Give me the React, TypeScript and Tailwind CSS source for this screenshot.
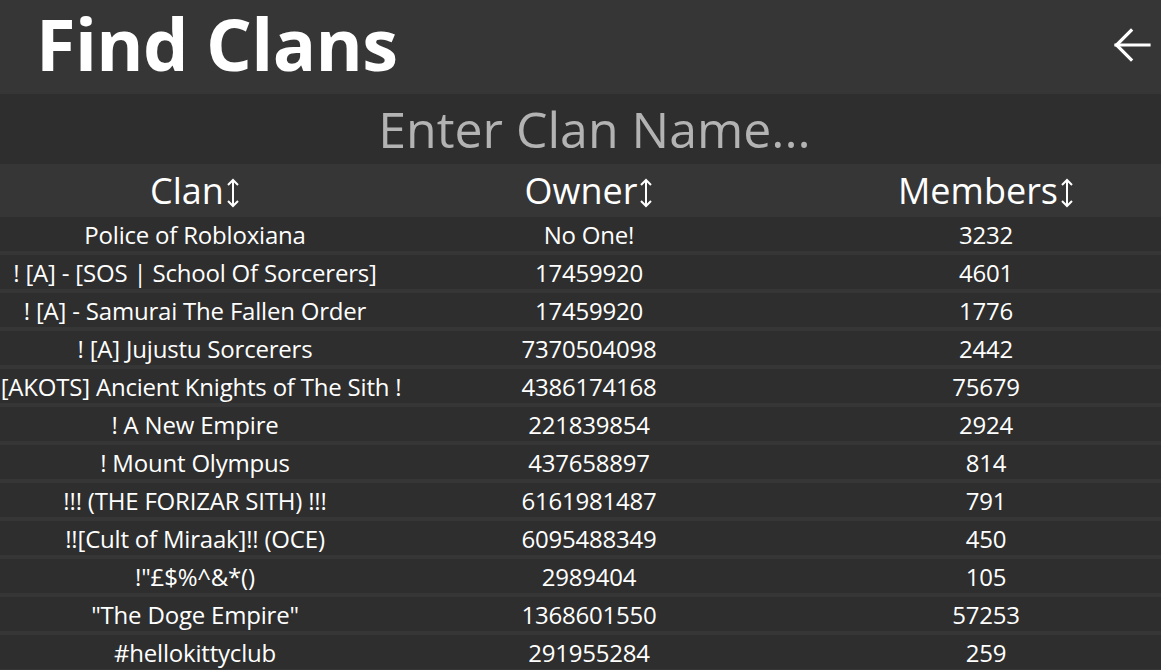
import React from 'react'

type Clan = {
  name: string;
  owner: string;
  members: string;
}

const clans: Clan[] = [
  { name: 'Police of Robloxiana', owner: 'No One!', members: '3232' },
  { name: '! [A] - [SOS | School Of Sorcerers]', owner: '17459920', members: '4601' },
  { name: '! [A] - Samurai The Fallen Order', owner: '17459920', members: '1776' },
  { name: '! [A] Jujustu Sorcerers', owner: '7370504098', members: '2442' },
  { name: '! [AKOTS] Ancient Knights of The Sith !', owner: '4386174168', members: '75679' },
  { name: '! A New Empire', owner: '221839854', members: '2924' },
  { name: '! Mount Olympus', owner: '437658897', members: '814' },
  { name: '!!! (THE FORIZAR SITH) !!!', owner: '6161981487', members: '791' },
  { name: '!![Cult of Miraak]!! (OCE)', owner: '6095488349', members: '450' },
  { name: '!"£$%^&*()', owner: '2989404', members: '105' },
  { name: '"The Doge Empire"', owner: '1368601550', members: '57253' },
  { name: '#hellokittyclub', owner: '291955284', members: '259' },
]

function Cell({ children, className }: { children: React.ReactNode; className?: string }) {
  return (
    <div className={"flex items-center justify-center whitespace-nowrap " + (className ?? "")}>
      {children}
    </div>
  )
}

// little up/down sort arrow next to the column titles
function SortArrow() {
  return (
    <svg width="14" height="30" viewBox="0 0 14 30" fill="none" stroke="white" strokeWidth="2" className="ml-[2px] mt-[4px]">
      <path d="M7 2v26" />
      <path d="M2 7l5-5 5 5" />
      <path d="M2 23l5 5 5-5" />
    </svg>
  )
}

export default function App() {
  return (
    <div className="h-[670px] w-[1161px] overflow-hidden bg-[#363636] text-white font-['Open_Sans',sans-serif]">
      {/* top bar */}
      <div className="flex h-[94px] items-start justify-between bg-[#363636] pl-[36px] pr-[10px]">
        <h1 className="whitespace-nowrap text-[72px] font-bold leading-[86px] tracking-[-0.6px]">Find Clans</h1>
        <button className="mt-[25px] flex h-[40px] w-[40px] items-center justify-center">
          <svg width="40" height="36" viewBox="0 0 40 36" fill="none" stroke="white" strokeWidth="3.2" strokeLinecap="square">
            <path d="M38 18H5" />
            <path d="M20 3.5 5.5 18 20 32.5" />
          </svg>
        </button>
      </div>

      {/* search */}
      <div className="flex h-[70px] items-center justify-center bg-[#2e2e2e] pl-[28px]">
        <input
          className="w-full bg-transparent text-center text-[50px] text-white outline-none placeholder:text-[#b3b3b3]"
          placeholder="Enter Clan Name..."
        />
      </div>

      {/* table header */}
      <div className="grid h-[53px] grid-cols-[390px_398px_396px] text-[36px]">
        <Cell>Clan<SortArrow /></Cell>
        <Cell>Owner<SortArrow /></Cell>
        <Cell>Members<SortArrow /></Cell>
      </div>

      {/* rows */}
      <div className="flex flex-col gap-[4px]">
        {clans.map((c, i) => (
          <div key={i} className="grid h-[34px] grid-cols-[390px_398px_396px] bg-[#2e2e2e] text-[24px] tracking-[-0.2px]">
            <Cell>{c.name}</Cell>
            <Cell>{c.owner}</Cell>
            <Cell>{c.members}</Cell>
          </div>
        ))}
      </div>
    </div>
  )
}
